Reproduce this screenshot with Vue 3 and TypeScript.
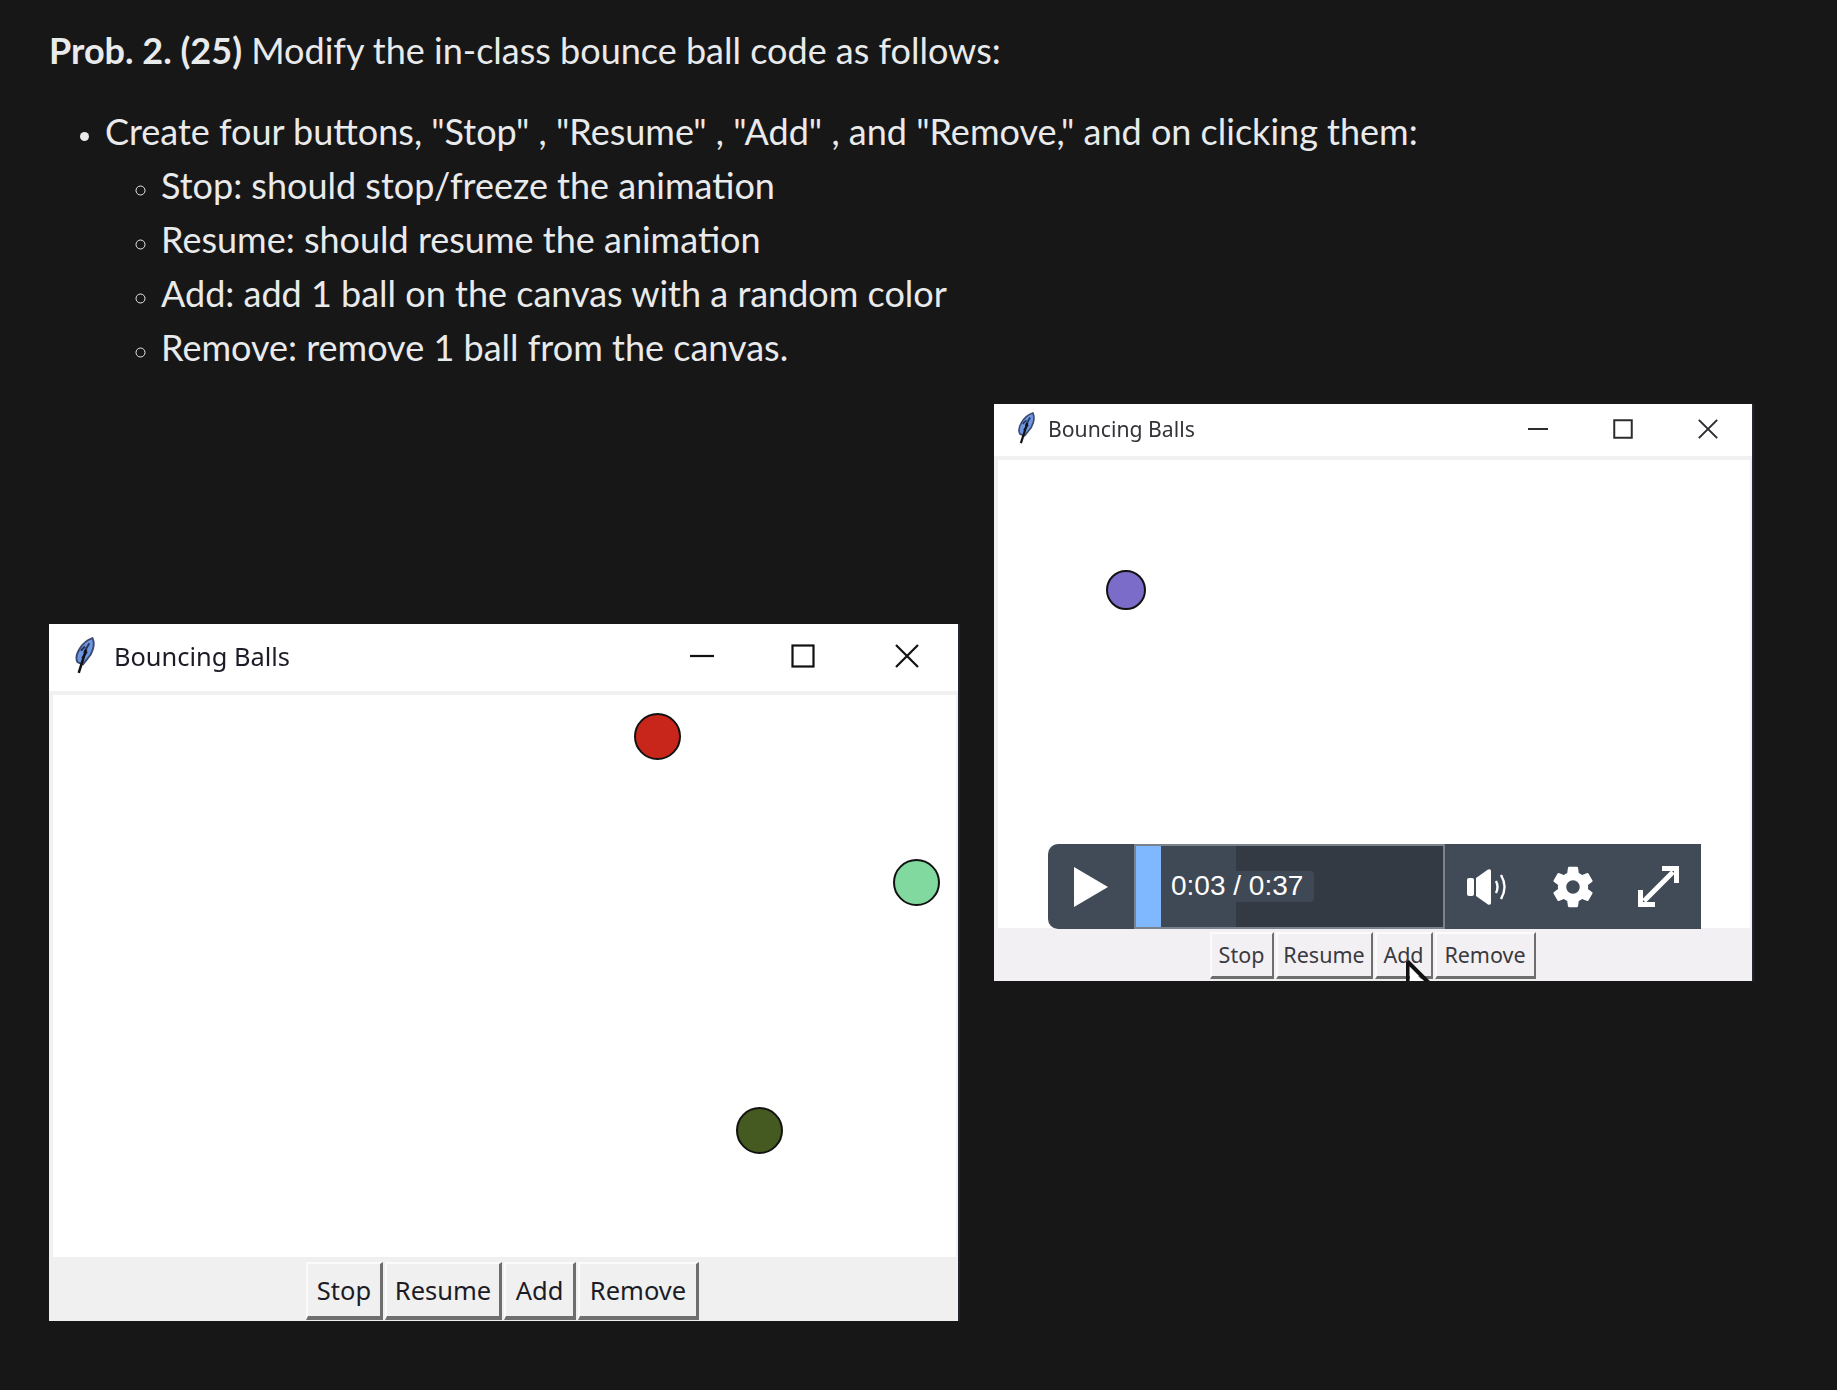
<script setup lang="ts">
interface Ball {
  x: number
  y: number
  d: number
  color: string
}
interface Btn {
  label: string
  w: number
}
interface Win {
  id: string
  balls: Ball[]
  buttons: Btn[]
}
interface Item {
  text: string
  lig?: string
}
const items: Item[] = [
  { text: 'Stop: should stop/freeze the ', lig: 'animation' },
  { text: 'Resume: should resume the ', lig: 'animation' },
  { text: 'Add: add 1 ball on the canvas with a random color' },
  { text: 'Remove: remove 1 ball from the canvas.' },
]
const winA: Win = {
  id: 'a',
  balls: [
    { x: 585, y: 18, d: 47, color: '#c9261b' },
    { x: 844, y: 164, d: 47, color: '#82d9a0' },
    { x: 687, y: 412, d: 47, color: '#445a20' },
  ],
  buttons: [
    { label: 'Stop', w: 77 },
    { label: 'Resume', w: 117 },
    { label: 'Add', w: 72 },
    { label: 'Remove', w: 121 },
  ],
}
const winB: Win = {
  id: 'b',
  balls: [{ x: 112, y: 110, d: 40, color: '#7a6cc8' }],
  buttons: [
    { label: 'Stop', w: 64 },
    { label: 'Resume', w: 97 },
    { label: 'Add', w: 58 },
    { label: 'Remove', w: 101 },
  ],
}
const windows: Win[] = [winA, winB]
</script>

<template>
  <main class="page">
    <p class="lead"><strong>Prob. 2. (25)</strong> Modify the in-class bounce ball code as follows:</p>
    <ul class="outer">
      <li>
        Create four buttons, "Stop" , "Resume" , "Add" , and "Remove," and on clicking them:
        <ul class="inner">
          <li v-for="item in items" :key="item.text">{{ item.text }}<span v-if="item.lig" class="lig">{{ item.lig }}</span></li>
        </ul>
      </li>
    </ul>

    <div class="figures">
      <section v-for="w in windows" :key="w.id" class="win" :class="'win-' + w.id">
        <header class="title">
          <svg class="feather" viewBox="0 0 20 36">
            <path d="M18 1 C21 7 18 16 13 21 L9 26 L4 24 C0 18 8 4 18 1 Z" fill="#6f97e0" stroke="#3c4a70" stroke-width="1.8" />
            <path d="M15 6 L10 15 M11 9 L7 13 M13 14 L8 20" stroke="#26345c" stroke-width="1.8" fill="none" />
            <path d="M12 12 L5 34" stroke="#111" stroke-width="2.4" fill="none" />
          </svg>
          <span class="title-text">Bouncing Balls</span>
          <svg class="ctl ctl-min" viewBox="0 0 24 24"><path d="M0 12 H24" /></svg>
          <svg class="ctl ctl-max" viewBox="0 0 24 24"><rect x="1.5" y="1.5" width="21" height="21" /></svg>
          <svg class="ctl ctl-close" viewBox="0 0 24 24"><path d="M1 1 L23 23 M23 1 L1 23" /></svg>
        </header>
        <div class="canvas">
          <span
            v-for="b in w.balls"
            :key="b.x"
            class="ball"
            :style="{ left: b.x + 'px', top: b.y + 'px', width: b.d + 'px', height: b.d + 'px', background: b.color }"
          ></span>
          <div v-if="w.id === 'b'" class="player">
            <div class="play-box">
              <svg class="play" viewBox="0 0 34 40"><path d="M0 0 L34 20 L0 40 Z" /></svg>
            </div>
            <div class="progress">
              <span class="buffered"></span>
              <span class="played"></span>
              <span class="time">0:03 / 0:37</span>
            </div>
            <div class="tools">
              <svg class="speaker" viewBox="0 0 41 36">
                <rect x="0" y="9" width="7" height="18" rx="2" fill="#fff" />
                <path d="M9 9 L21 0.5 Q24 -0.5 24 2 L24 34 Q24 36.5 21 35.5 L9 27 Z" fill="#fff" />
                <path d="M29 12 Q32 18 29 24 M34 6 Q41 18 34 30" fill="none" stroke="#fff" stroke-width="2.4" />
              </svg>
              <svg class="gear" viewBox="2.6 2 18.8 20">
                <path fill="#fff" fill-rule="evenodd" d="M19.14 12.94c.04-.3.06-.61.06-.94 0-.32-.02-.64-.07-.94l2.03-1.58c.18-.14.23-.41.12-.61l-1.92-3.32c-.12-.22-.37-.29-.59-.22l-2.39.96c-.5-.38-1.03-.7-1.62-.94l-.36-2.54c-.04-.24-.24-.41-.48-.41h-3.84c-.24 0-.43.17-.47.41l-.36 2.54c-.59.24-1.13.57-1.62.94l-2.39-.96c-.22-.08-.47 0-.59.22L2.74 8.87c-.12.21-.08.47.12.61l2.03 1.58c-.05.3-.09.63-.09.94s.02.64.07.94l-2.03 1.58c-.18.14-.23.41-.12.61l1.92 3.32c.12.22.37.29.59.22l2.39-.96c.5.38 1.03.7 1.62.94l.36 2.54c.05.24.24.41.48.41h3.84c.24 0 .44-.17.47-.41l.36-2.54c.59-.24 1.13-.56 1.62-.94l2.39.96c.22.08.47 0 .59-.22l1.92-3.32c.12-.22.07-.47-.12-.61l-2.01-1.58zM12 15.2c-1.77 0-3.2-1.43-3.2-3.2s1.43-3.2 3.2-3.2 3.2 1.43 3.2 3.2-1.43 3.2-3.2 3.2z" />
              </svg>
              <svg class="expand" viewBox="0 0 41 41">
                <path d="M6 35 L35 6" fill="none" stroke="#fff" stroke-width="5" />
                <path d="M24 2.5 H38.5 V17 M2.5 24 V38.5 H17" fill="none" stroke="#fff" stroke-width="5" />
              </svg>
            </div>
          </div>
        </div>
        <footer class="bar">
          <button v-for="btn in w.buttons" :key="btn.label" class="tk" type="button" :style="{ width: btn.w + 'px' }">{{ btn.label }}</button>
        </footer>
        <svg v-if="w.id === 'b'" class="cursor" viewBox="0 0 26 34">
          <path d="M1.5 1.5 L1.5 30 M1.5 1.5 L23 23" fill="none" stroke="#111" stroke-width="4" />
          <path d="M4 8 L4 26 L16 20 Z" fill="#fff" />
        </svg>
      </section>
    </div>
  </main>
</template>

<style>
html,
body {
  margin: 0;
  background: #171717;
}
</style>

<style scoped>
.page {
  box-sizing: border-box;
  width: 1837px;
  height: 1390px;
  overflow: hidden;
  padding: 23px 0 0 49px;
  background: #171717;
  color: #e9eaec;
  font-family: Lato, "Open Sans", sans-serif;
  font-size: 36px;
  line-height: 54px;
}
.lig {
  font-feature-settings: "dlig", "liga";
}
.lead {
  margin: 0 0 27px;
}
.outer {
  margin: 0;
  padding: 0 0 0 56px;
  list-style: disc;
}
.inner {
  margin: 0;
  padding: 0 0 0 56px;
  list-style: circle;
}
.outer li::marker {
  font-size: 28px;
}
.figures {
  display: flex;
  align-items: flex-start;
  gap: 36px;
  margin-top: 30px;
}
.win {
  position: relative;
  display: flex;
  flex-direction: column;
  flex: none;
  overflow: hidden;
  background: #fff;
  color: #1c1c26;
  font-family: "Noto Sans", "Open Sans", sans-serif;
  line-height: 1;
  filter: blur(0.4px);
  box-shadow: 2px 0 0 #20252e;
}
.win-a {
  width: 909px;
  height: 697px;
  margin-top: 220px;
}
.win-b {
  width: 758px;
  height: 577px;
  color: #33343a;
}
.title {
  display: flex;
  align-items: center;
  flex: none;
  box-sizing: border-box;
  border-bottom: 4px solid #f1f1f1;
}
.win-a .title {
  height: 71px;
  padding: 0 39px 3px 24px;
  font-size: 25.4px;
}
.win-a .title-text {
  padding-top: 2px;
}
.win-b .title {
  height: 56px;
  padding: 0 34px 3px 22px;
  font-size: 21.2px;
}
.feather {
  flex: none;
}
.win-a .feather {
  width: 22px;
  height: 38px;
  margin-right: 19px;
}
.win-b .feather {
  width: 19px;
  height: 33px;
  margin-right: 13px;
}
.title-text {
  flex: 1;
}
.ctl {
  flex: none;
  fill: none;
  stroke: #111;
  overflow: visible;
}
.win-a .ctl {
  width: 24px;
  height: 24px;
  stroke-width: 2.2;
}
.win-b .ctl {
  width: 20px;
  height: 20px;
  stroke-width: 2.4;
  stroke: #2c2c30;
}
.win-a .ctl-min {
  margin-right: 77px;
}
.win-a .ctl-max {
  margin-right: 80px;
}
.win-b .ctl-min {
  margin-right: 65px;
}
.win-b .ctl-max {
  margin-right: 65px;
}
.canvas {
  position: relative;
  flex: 1;
  background: #fff;
  box-shadow: inset 4px 0 0 #f1f1f1, inset -2px 0 0 #f1f1f1;
}
.ball {
  position: absolute;
  box-sizing: border-box;
  border: 2px solid #121212;
  border-radius: 50%;
}
.bar {
  display: flex;
  justify-content: center;
  flex: none;
  box-sizing: border-box;
}
.win-a .bar {
  height: 64px;
  padding: 5px 2px 0 0;
  gap: 2px;
  background: #f0f0f0;
}
.win-b .bar {
  height: 53px;
  padding: 4px 1px 0 0;
  gap: 2px;
  background: #f3f0f3;
}
.tk {
  box-sizing: border-box;
  padding: 0;
  margin: 0;
  background: inherit;
  color: inherit;
  font: inherit;
  border-style: solid;
  border-color: #fbfbfb #6e6e6e #6e6e6e #fbfbfb;
  border-radius: 0;
}
.win-a .tk {
  height: 58px;
  padding-top: 2px;
  font-size: 25.5px;
  border-width: 2px 3px 4px 2px;
}
.win-b .tk {
  height: 47px;
  font-size: 21.5px;
  border-width: 2px 2px 3px 2px;
  color: #3a3a40;
}
.player {
  position: absolute;
  left: 54px;
  top: 384px;
  display: flex;
  width: 653px;
  height: 85px;
  background: #414b58;
  border-radius: 10px 0 0 10px;
}
.play-box {
  display: flex;
  align-items: center;
  flex: none;
  width: 86px;
  padding-left: 26px;
  box-sizing: border-box;
}
.play {
  width: 34px;
  height: 40px;
  fill: #fff;
}
.progress {
  position: relative;
  flex: none;
  box-sizing: border-box;
  width: 311px;
  display: flex;
  align-items: center;
  padding-left: 25px;
  background: #343a44;
  border: 2px solid #7a828c;
}
.buffered {
  position: absolute;
  left: 0;
  top: 0;
  bottom: 0;
  width: 100px;
  background: #3f4955;
}
.played {
  position: absolute;
  left: 0;
  top: 0;
  bottom: 0;
  width: 25px;
  background: #7fb8ff;
}
.time {
  position: relative;
  padding: 3px 11px 5px 10px;
  background: #3f4955;
  border-radius: 4px;
  color: #fff;
  font-family: "Liberation Sans", Arial, sans-serif;
  font-size: 28px;
  line-height: 23px;
}
.tools {
  display: flex;
  align-items: center;
  flex: 1;
  padding-left: 22px;
}
.speaker {
  width: 41px;
  height: 36px;
}
.gear {
  width: 40px;
  height: 42px;
  margin-left: 45px;
}
.expand {
  width: 41px;
  height: 41px;
  margin-left: 45px;
}
.cursor {
  position: absolute;
  left: 412px;
  top: 556px;
  width: 26px;
  height: 34px;
}
</style>
